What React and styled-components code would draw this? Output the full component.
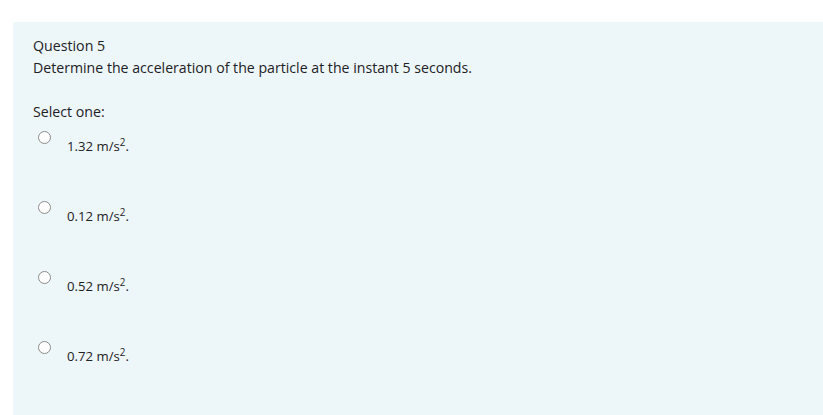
import React from "react";
import styled, { createGlobalStyle } from "styled-components";

const Global = createGlobalStyle`
  html, body { margin: 0; padding: 0; background: #ffffff; }
  body { font-family: "Open Sans", "Noto Sans", sans-serif; color: #1d2125; }
`;

const Page = styled.div`
  padding: 22px 0 0 13px;
`;

const Panel = styled.div`
  background: #edf7fa;
  border-radius: 3px 0 0 0;
  min-height: 393px;
  padding: 13px 20px 0 20px;
  box-sizing: border-box;
`;

const Title = styled.div`
  font-size: 14.2px;
  line-height: 21px;
`;

const Prompt = styled.div`
  font-size: 14.15px;
  line-height: 21px;
  margin-top: 1px;
`;

const Label = styled.div`
  font-size: 14.2px;
  line-height: 21px;
  margin-top: 23px;
`;

const Options = styled.div`
  display: flex;
  flex-direction: column;
  gap: 49px;
  margin-top: 6px;
  padding-left: 5px;
`;

const Option = styled.label`
  display: flex;
  align-items: flex-start;
  gap: 16px;
  height: 21px;
`;

const Radio = styled.span`
  width: 11px;
  height: 11px;
  border: 1px solid #8a8a8a;
  border-radius: 50%;
  background: #fff;
  margin-top: 3px;
  flex: none;
`;

const OptText = styled.span`
  font-size: 13.2px;
  line-height: 21px;
  margin-top: 4px;
`;

const Sup = styled.sup`
  font-size: 0.75em;
`;

const options = ["1.32", "0.12", "0.52", "0.72"];

export default function App() {
  return (
    <>
      <Global />
      <Page>
        <Panel>
          <Title>Question 5</Title>
          <Prompt>Determine the acceleration of the particle at the instant 5 seconds.</Prompt>
          <Label>Select one:</Label>
          <Options>
            {options.map((o) => (
              <Option key={o}>
                <Radio />
                <OptText>
                  {o} m/s<Sup>2</Sup>.
                </OptText>
              </Option>
            ))}
          </Options>
        </Panel>
      </Page>
    </>
  );
}
